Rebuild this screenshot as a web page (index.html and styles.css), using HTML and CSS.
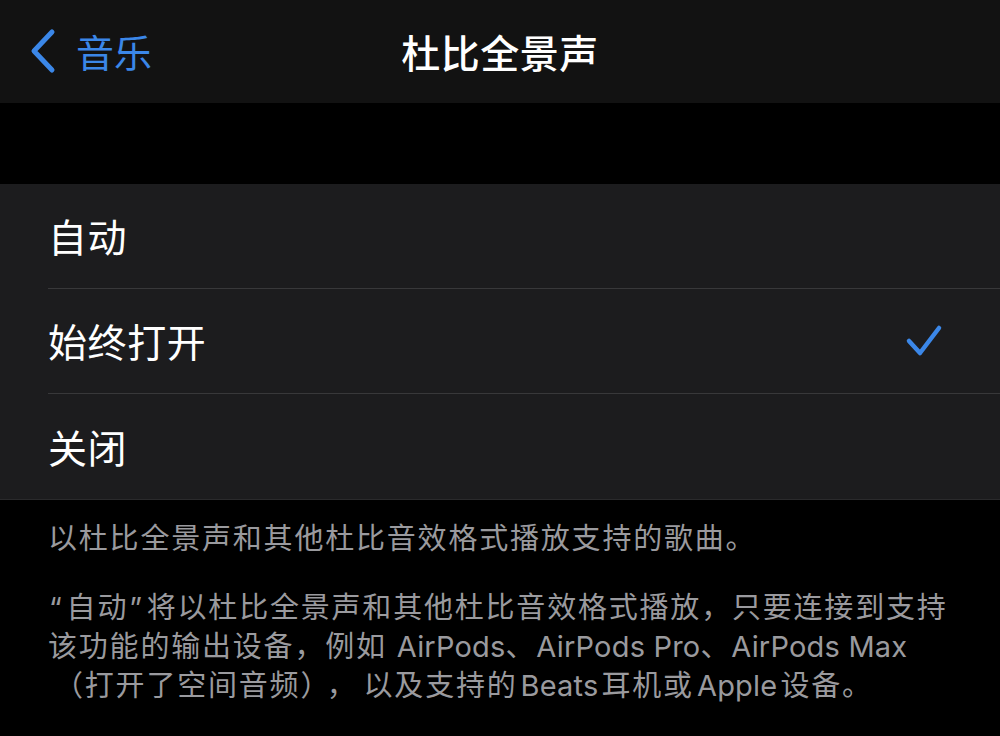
FILE: index.html
```html
<!DOCTYPE html>
<html lang="zh-CN">
<head>
    <meta charset="UTF-8">
    <meta name="viewport" content="width=device-width, initial-scale=1.0">
    <title>杜比全景声</title>
    <link rel="stylesheet" href="styles.css">
</head>
<body>
    <div class="barra">
        <div class="volver">
            <svg class="flecha" width="28" height="46" viewBox="0 0 28 46">
                <path d="M23 4 L5 23 L23 42" fill="none" stroke="#3b87e8" stroke-width="5" stroke-linecap="round" stroke-linejoin="round"/>
            </svg>
            <span>音乐</span>
        </div>
        <div class="titulo">杜比全景声</div>
        <div></div>
    </div>

    <div class="espacio"></div>

    <div class="grupo">
        <div class="fila"><div class="fila-interior">自动</div></div>
        <div class="fila">
            <div class="fila-interior">
                <span>始终打开</span>
                <svg class="check" width="40" height="40" viewBox="0 0 40 40">
                    <path d="M5 20 L16 32 L35 7" fill="none" stroke="#3b87e8" stroke-width="4.5" stroke-linecap="round" stroke-linejoin="round"/>
                </svg>
            </div>
        </div>
        <div class="fila"><div class="fila-interior ultima">关闭</div></div>
    </div>

    <div class="pie">
        <p class="nota">以杜比全景声和其他杜比音效格式播放支持的歌曲。</p>
        <p class="nota"><span class="q">“</span>自动<span class="q">”</span>将以杜比全景声和其他杜比音效格式播放，只要连接到支持<br>该功能的输出设备，例如 <span class="lat">AirPods</span>、<span class="lat">AirPods Pro</span>、<span class="lat">AirPods Max</span><br><span class="paren">（</span>打开了空间音频）<span class="coma">，</span>以及支持的<span class="lat sp">Beats</span>耳机或<span class="lat sp">Apple</span>设备。</p>
    </div>
</body>
</html>
```

FILE: styles.css
```css
body {
    font-family: 'Inter', 'Noto Sans CJK SC', sans-serif;
    background: #000;
    color: white;
    margin: 0;
    width: 1000px;
    height: 736px;
    overflow: hidden;
}

.barra {
    height: 103px;
    background: #121212;
    display: grid;
    grid-template-columns: 1fr auto 1fr;
    align-items: center;
}

.volver {
    display: flex;
    align-items: center;
    gap: 19px;
    padding-left: 29px;
    color: #3b87e8;
    font-size: 38px;
    padding-bottom: 2px;
}

.titulo {
    font-size: 39px;
    font-weight: 500;
    letter-spacing: 0.5px;
    padding-bottom: 2px;
}

.espacio {
    height: 81px;
}

.grupo {
    background: #1c1c1e;
}

.fila {
    padding-left: 48px;
}

.fila-interior {
    height: 105px;
    box-sizing: border-box;
    border-bottom: 1px solid #38383a;
    display: flex;
    align-items: center;
    justify-content: space-between;
    padding-right: 56px;
    padding-bottom: 2px;
    font-size: 39px;
    letter-spacing: 0.6px;
}

.ultima {
    border-bottom: none;
}

.check {
    margin-top: 2px;
}

.pie {
    padding: 19px 0 0 48px;
    border-top: 1px solid #2a2a2c;
}

.nota {
    margin: 0 0 30px;
    font-size: 29px;
    line-height: 39px;
    letter-spacing: 1.8px;
    color: #9a9a9e;
    white-space: nowrap;
}

.q {
    margin: 0 3px 0 1px;
}

.paren {
    margin-left: 6px;
}

.coma {
    margin: 0 6px 0 10px;
}

.lat {
    letter-spacing: 0.2px;
}

.sp {
    margin: 0 3px;
}
```
